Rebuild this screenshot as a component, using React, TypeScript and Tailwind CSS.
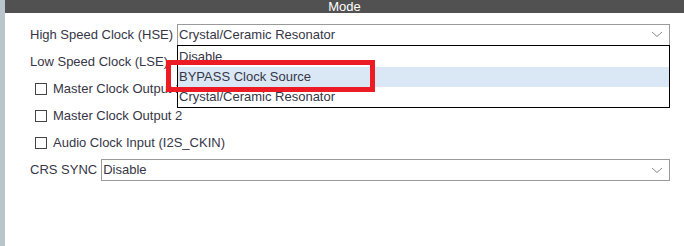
const font = "font-['Liberation_Sans',Arial,sans-serif]";

function Chevron() {
  return (
    <svg width="12" height="7" viewBox="0 0 12 7" className="shrink-0">
      <path d="M1 1 L6 5.5 L11 1" fill="none" stroke="#8a8a8a" strokeWidth="1" />
    </svg>
  );
}

function Select({ value }: { value: string }) {
  return (
    <div className="flex h-[22px] flex-1 items-center justify-between border border-[#9a9a9a] bg-white pl-[1px] pr-[6px]">
      <span className="text-[13px] text-[#363646]">{value}</span>
      <Chevron />
    </div>
  );
}

function CheckRow({ label }: { label: string }) {
  return (
    <div className="flex h-[21px] items-center gap-[6px] pl-[5px]">
      <span className="h-[12px] w-[12px] border border-[#444] bg-white" />
      <span className="text-[13px] text-[#363646]">{label}</span>
    </div>
  );
}

export default function App() {
  return (
    <div className={`flex h-[246px] w-[684px] overflow-hidden bg-white ${font}`}>
      <div className="w-[5px] shrink-0 bg-[#b9c4cb]" />
      <div className="flex flex-1 flex-col">
        <div className="flex h-[13px] items-end justify-center overflow-hidden bg-[#505150]">
          <span className="text-[13px] leading-[13px] text-white">Mode</span>
        </div>
        <div className="flex flex-col gap-[6px] pl-[25px] pr-[14px] pt-[11px]">
          <div className="relative flex h-[21px] items-center gap-[4px]">
            <span className="text-[13px] text-[#363646]">High Speed Clock (HSE)</span>
            <Select value="Crystal/Ceramic Resonator" />
            <div className="absolute left-[147px] right-0 top-[21px] z-10 flex flex-col border border-black bg-white text-[13px] text-[#363646]">
              <div className="flex h-[21px] items-center pl-[1px]">Disable</div>
              <div className="flex h-[20px] items-center bg-[#dae8f5] pl-[1px]">BYPASS Clock Source</div>
              <div className="flex h-[20px] items-center pl-[1px]">Crystal/Ceramic Resonator</div>
            </div>
            <div className="absolute left-[136px] top-[36px] z-20 h-[32px] w-[209px] border-[5px] border-[#ed1c24]" />
          </div>
          <div className="flex h-[21px] items-center">
            <span className="text-[13px] text-[#363646]">Low Speed Clock (LSE)</span>
          </div>
          <CheckRow label="Master Clock Output 1" />
          <CheckRow label="Master Clock Output 2" />
          <CheckRow label="Audio Clock Input (I2S_CKIN)" />
          <div className="flex h-[22px] items-center gap-[4px]">
            <span className="text-[13px] text-[#363646]">CRS SYNC</span>
            <Select value="Disable" />
          </div>
        </div>
      </div>
    </div>
  );
}
